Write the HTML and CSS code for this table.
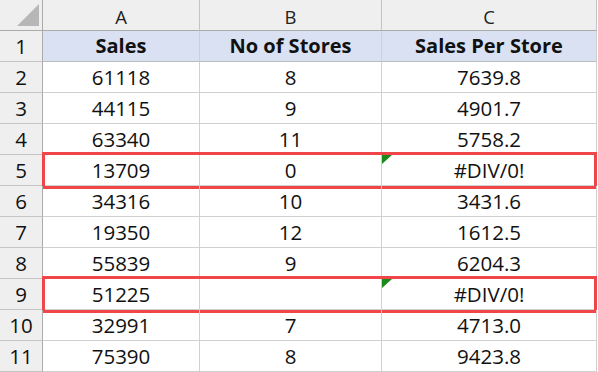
FILE: index.html
```html
<!DOCTYPE html>
<html>
<head>
<meta charset="utf-8">
<link rel="stylesheet" href="styles.css">
</head>
<body>
<div class="sheet">
  <div class="row head">
    <div class="cell corner"><span class="tri"></span></div>
    <div class="cell colh">A</div>
    <div class="cell colh">B</div>
    <div class="cell colh">C</div>
  </div>
  <div class="row titles">
    <div class="cell rowh">1</div>
    <div class="cell bold">Sales</div>
    <div class="cell bold">No of Stores</div>
    <div class="cell bold">Sales Per Store</div>
  </div>
  <div class="row"><div class="cell rowh">2</div><div class="cell">61118</div><div class="cell">8</div><div class="cell">7639.8</div></div>
  <div class="row"><div class="cell rowh">3</div><div class="cell">44115</div><div class="cell">9</div><div class="cell">4901.7</div></div>
  <div class="row"><div class="cell rowh">4</div><div class="cell">63340</div><div class="cell">11</div><div class="cell">5758.2</div></div>
  <div class="row flagged"><div class="cell rowh">5</div><div class="cell">13709</div><div class="cell">0</div><div class="cell err"><span class="warn"></span>#DIV/0!</div></div>
  <div class="row"><div class="cell rowh">6</div><div class="cell">34316</div><div class="cell">10</div><div class="cell">3431.6</div></div>
  <div class="row"><div class="cell rowh">7</div><div class="cell">19350</div><div class="cell">12</div><div class="cell">1612.5</div></div>
  <div class="row"><div class="cell rowh">8</div><div class="cell">55839</div><div class="cell">9</div><div class="cell">6204.3</div></div>
  <div class="row flagged"><div class="cell rowh">9</div><div class="cell">51225</div><div class="cell"></div><div class="cell err"><span class="warn"></span>#DIV/0!</div></div>
  <div class="row"><div class="cell rowh">10</div><div class="cell">32991</div><div class="cell">7</div><div class="cell">4713.0</div></div>
  <div class="row"><div class="cell rowh">11</div><div class="cell">75390</div><div class="cell">8</div><div class="cell">9423.8</div></div>
</div>
</body>
</html>
```
FILE: styles.css
```css
html, body {
  margin: 0;
  padding: 0;
  background: #ffffff;
}
.sheet {
  width: 597px;
  font-family: "Open Sans", "Noto Sans", sans-serif;
  color: #111111;
}
.row {
  display: grid;
  grid-template-columns: 43px 157px 182px 215px;
  height: 31px;
  position: relative;
}
.cell {
  box-sizing: border-box;
  border-right: 1px solid #d0d0d0;
  border-bottom: 1px solid #d0d0d0;
  display: flex;
  align-items: center;
  justify-content: center;
  font-size: 20.5px;
  line-height: 1;
  position: relative;
}
.head .cell {
  background: #efefef;
  border-bottom-color: #ababab;
  border-right-color: #c4c4c4;
}
.colh {
  font-size: 18.5px;
  color: #222222;
  align-items: flex-end;
  padding-bottom: 4px;
}
.corner {
  border-right-color: #ababab !important;
}
.tri {
  position: absolute;
  left: 17px;
  top: 4px;
  width: 0;
  height: 0;
  border-left: 22px solid transparent;
  border-bottom: 22px solid #b7b7b7;
}
.rowh {
  background: #efefef;
  border-right-color: #ababab;
  border-bottom-color: #c4c4c4;
  color: #111111;
}
.titles .cell:not(.rowh) {
  background: #d9e1f2;
  border-bottom-color: #bcbcbc;
}
.bold {
  font-weight: 700;
  font-size: 20px;
}
.warn {
  position: absolute;
  left: 0;
  top: 0;
  width: 0;
  height: 0;
  border-top: 9px solid #1b8a1b;
  border-right: 10px solid transparent;
}
.flagged::after {
  content: "";
  position: absolute;
  left: 42px;
  right: 0;
  top: -3px;
  bottom: -3px;
  border: 3px solid #f0464a;
  pointer-events: none;
}
```
